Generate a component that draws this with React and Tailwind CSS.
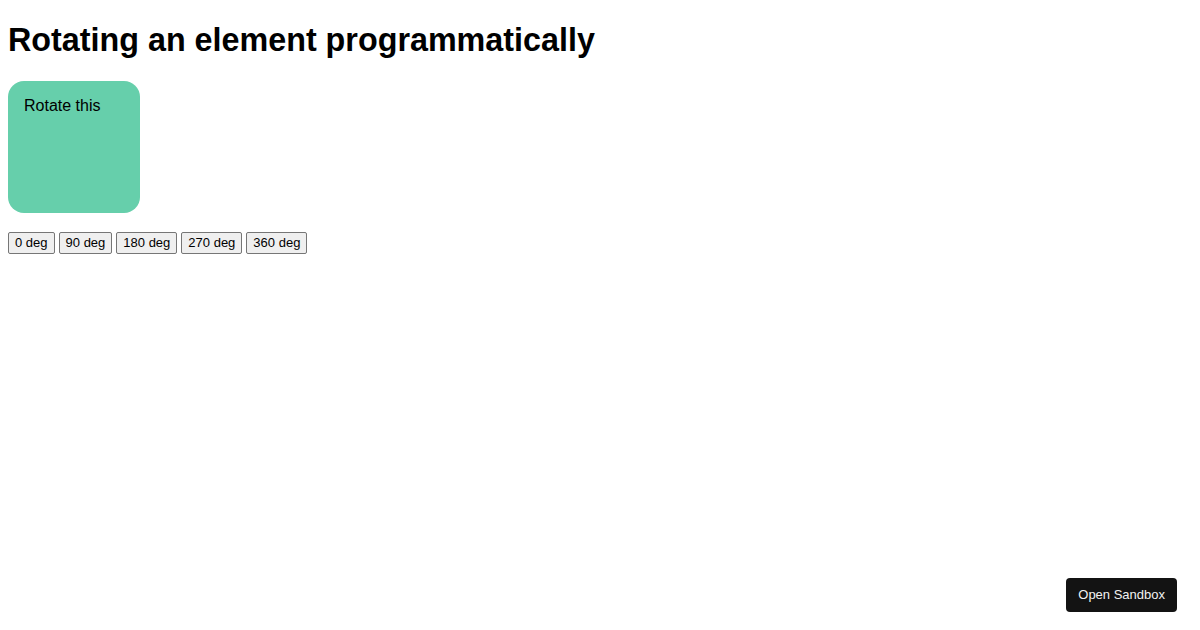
import React, { useState } from 'react';

const angles = [0, 90, 180, 270, 360];

export default function App() {
  const [angle, setAngle] = useState(0);

  return (
    <div className="min-h-[630px] bg-white p-2 text-black font-['Liberation_Sans',Arial,sans-serif]">
      <h1 className="mt-[14px] mb-[22px] text-[32.3px] font-bold leading-[37px]">
        Rotating an element programmatically
      </h1>
      <div
        className="w-[132px] h-[132px] rounded-[16px] bg-[#66cfab] p-4 text-base leading-[18px]"
        style={{ transform: `rotate(${angle}deg)` }}
      >
        Rotate this
      </div>
      <div className="mt-[19px] flex gap-1">
        {angles.map((a) => (
          <button
            key={a}
            type="button"
            onClick={() => setAngle(a)}
            className="h-[22px] px-[6px] border border-[#767676] rounded-[2px] bg-[#efefef] text-[13px] leading-[18px]"
          >
            {a} deg
          </button>
        ))}
      </div>
      <button
        type="button"
        className="fixed right-[23px] bottom-[18px] h-[34px] px-[12px] rounded-[4px] bg-[#131313] text-[#f2f2f2] text-[13px]"
      >
        Open Sandbox
      </button>
    </div>
  );
}
